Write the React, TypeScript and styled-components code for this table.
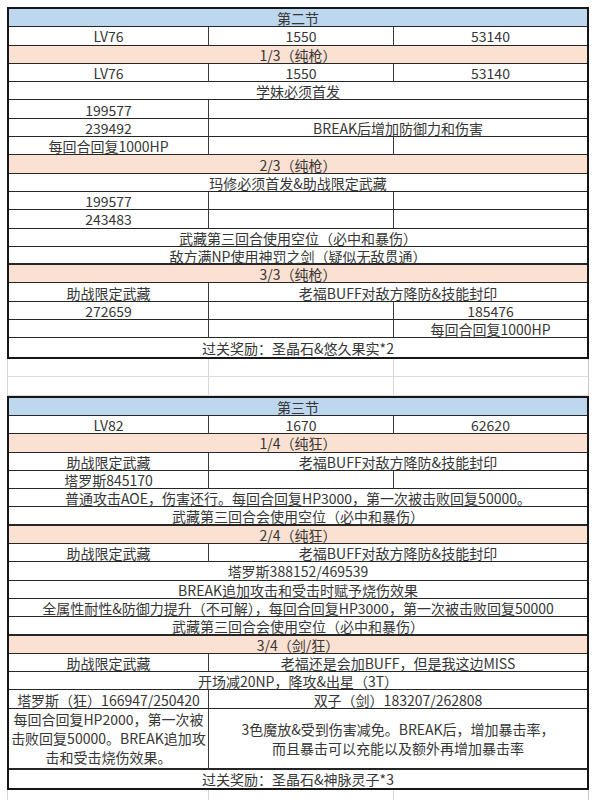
import React from "react";
import styled, { createGlobalStyle } from "styled-components";

type Tone = "blue" | "peach";

interface CellData {
  text?: string;
  span?: number;
}

interface RowData {
  cells: CellData[];
  tone?: Tone;
  heavy?: boolean;
  tall?: boolean;
}

const GlobalStyle = createGlobalStyle`
  html, body {
    margin: 0;
    padding: 0;
    background: #fff;
  }
  body {
    font-family: "Noto Sans CJK SC", "Noto Sans", sans-serif;
    color: #363636;
  }
`;

const Page = styled.div`
  width: 596px;
  padding: 7px 0 0 7px;
  box-sizing: border-box;
`;

const Sheet = styled.div`
  width: 582px;
  display: flex;
  flex-direction: column;
`;

const Table = styled.div`
  display: grid;
  grid-template-columns: 199px 185px 194px;
  border: 2px solid #161616;
`;

const tones: Record<Tone, string> = {
  blue: "#bdd7ee",
  peach: "#fbe1d2",
};

const Cell = styled.div<{
  $span: number;
  $tone?: Tone;
  $divider: boolean;
  $bottom: number;
  $tall?: boolean;
}>`
  grid-column: span ${(p) => p.$span};
  height: ${(p) => (p.$tall ? "61px" : "18.3px")};
  box-sizing: border-box;
  border-left: ${(p) => (p.$divider ? "1px solid #3c3c3c" : "none")};
  border-bottom: ${(p) => (p.$bottom ? `${p.$bottom}px solid #262626` : "none")};
  background: ${(p) => (p.$tone ? tones[p.$tone] : "#fff")};
  display: flex;
  align-items: center;
  justify-content: center;
  text-align: center;
  font-size: 14px;
  line-height: ${(p) => (p.$tall ? "19px" : "16px")};
  padding-top: 1px;
  white-space: pre;
`;

const Spacer = styled.div`
  display: grid;
  grid-template-columns: 201px 185px 196px;
  grid-auto-rows: 18.5px;
`;

const SpacerCell = styled.div<{ $last: boolean }>`
  box-sizing: border-box;
  border-left: 1px solid #d8d8d8;
  border-right: ${(p) => (p.$last ? "1px solid #c8c8c8" : "none")};
  border-bottom: 1px solid #dcdcdc;
`;

const c = (text?: string, span = 1): CellData => ({ text, span });
const full = (text: string, tone?: Tone, heavy?: boolean): RowData => ({
  cells: [c(text, 3)],
  tone,
  heavy,
});

const secondStage: RowData[] = [
  full("第二节", "blue"),
  { cells: [c("LV76"), c("1550"), c("53140")] },
  full("1/3（纯枪）", "peach"),
  { cells: [c("LV76"), c("1550"), c("53140")] },
  full("学妹必须首发"),
  { cells: [c("199577"), c("", 2)] },
  { cells: [c("239492"), c("BREAK后增加防御力和伤害", 2)] },
  { cells: [c("每回合回复1000HP"), c(), c()] },
  full("2/3（纯枪）", "peach"),
  full("玛修必须首发&助战限定武藏"),
  { cells: [c("199577"), c(), c()] },
  { cells: [c("243483"), c(), c()] },
  full("武藏第三回合使用空位（必中和暴伤）"),
  full("敌方满NP使用神罚之剑（疑似无敌贯通）", undefined, true),
  full("3/3（纯枪）", "peach"),
  { cells: [c("助战限定武藏"), c("老福BUFF对敌方降防&技能封印", 2)] },
  { cells: [c("272659"), c(), c("185476")] },
  { cells: [c(), c(), c("每回合回复1000HP")] },
  full("过关奖励：圣晶石&悠久果实*2"),
];

const thirdStage: RowData[] = [
  full("第三节", "blue"),
  { cells: [c("LV82"), c("1670"), c("62620")] },
  full("1/4（纯狂）", "peach"),
  { cells: [c("助战限定武藏"), c("老福BUFF对敌方降防&技能封印", 2)] },
  { cells: [c("塔罗斯845170"), c(), c()] },
  full("普通攻击AOE，伤害还行。每回合回复HP3000，第一次被击败回复50000。"),
  full("武藏第三回合会使用空位（必中和暴伤）", undefined, true),
  full("2/4（纯狂）", "peach"),
  { cells: [c("助战限定武藏"), c("老福BUFF对敌方降防&技能封印", 2)] },
  full("塔罗斯388152/469539"),
  full("BREAK追加攻击和受击时赋予烧伤效果"),
  full("全属性耐性&防御力提升（不可解），每回合回复HP3000，第一次被击败回复50000"),
  full("武藏第三回合会使用空位（必中和暴伤）", undefined, true),
  full("3/4（剑/狂）", "peach"),
  { cells: [c("助战限定武藏"), c("老福还是会加BUFF，但是我这边MISS", 2)] },
  full("开场减20NP，降攻&出星（3T）"),
  { cells: [c("塔罗斯（狂）166947/250420"), c("双子（剑）183207/262808", 2)] },
  {
    tall: true,
    heavy: true,
    cells: [
      c("每回合回复HP2000，第一次被\n击败回复50000。BREAK追加攻\n击和受击烧伤效果。"),
      c("3色魔放&受到伤害减免。BREAK后，增加暴击率，\n而且暴击可以充能以及额外再增加暴击率", 2),
    ],
  },
  full("过关奖励：圣晶石&神脉灵子*3"),
];

const StageTable = ({ rows }: { rows: RowData[] }) => (
  <Table>
    {rows.map((row, r) => {
      let col = 0;
      const last = r === rows.length - 1;
      return row.cells.map((cell, i) => {
        const span = cell.span ?? 1;
        const start = col;
        col += span;
        return (
          <Cell
            key={`${r}-${i}`}
            $span={span}
            $tone={row.tone}
            $divider={start > 0}
            $bottom={last ? 0 : row.heavy ? 2 : 1}
            $tall={row.tall}
          >
            {cell.text}
          </Cell>
        );
      });
    })}
  </Table>
);

const Gridlines = ({ rows }: { rows: number }) => (
  <Spacer>
    {Array.from({ length: rows * 3 }, (_, i) => (
      <SpacerCell key={i} $last={i % 3 === 2} />
    ))}
  </Spacer>
);

export default function App() {
  return (
    <Page>
      <GlobalStyle />
      <Sheet>
        <StageTable rows={secondStage} />
        <Gridlines rows={2} />
        <StageTable rows={thirdStage} />
        <Gridlines rows={1} />
      </Sheet>
    </Page>
  );
}
